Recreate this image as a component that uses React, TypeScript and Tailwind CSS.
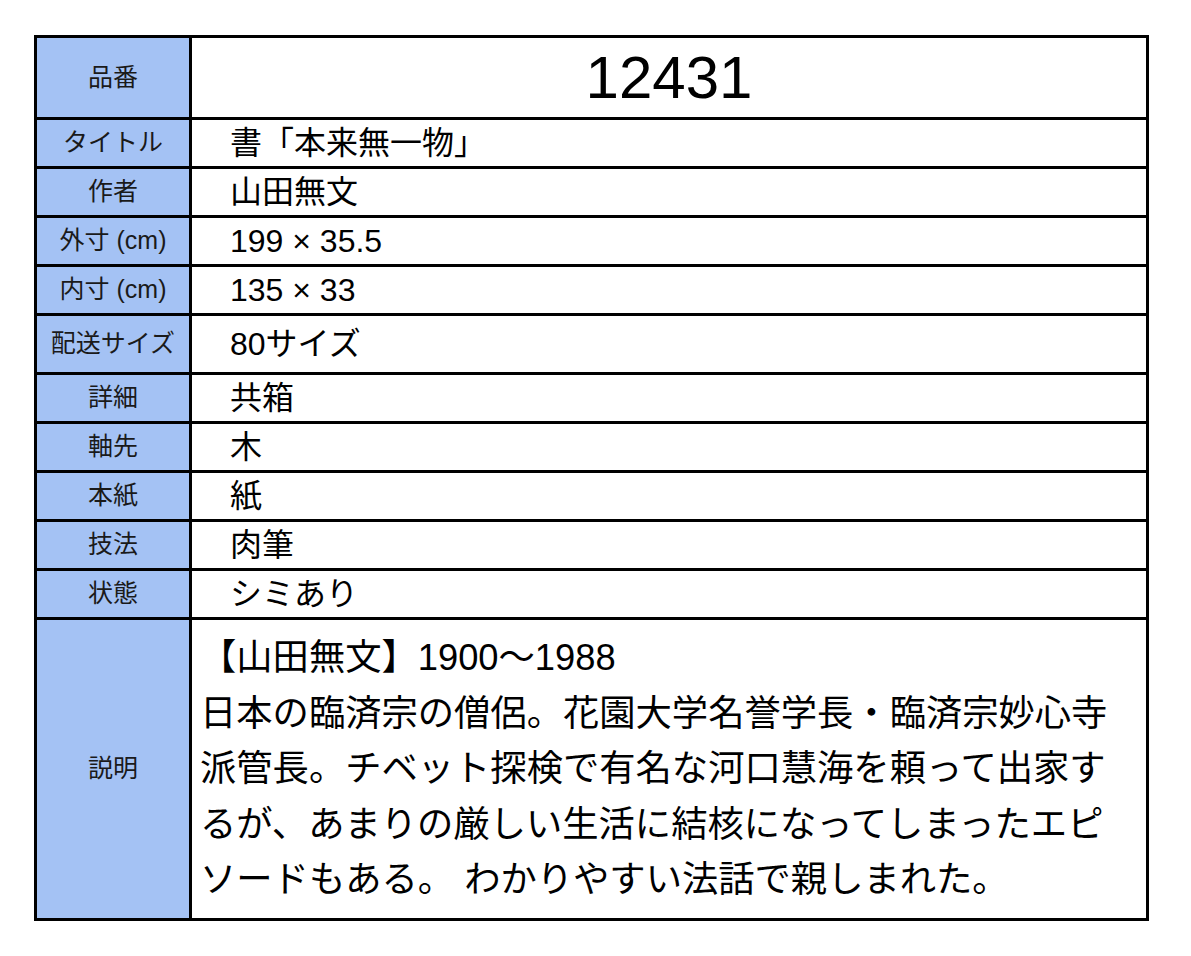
import React from 'react';

interface Row {
  label: string;
  value: string;
  h: string;
}

const rows: Row[] = [
  { label: 'タイトル', value: '書「本来無一物」', h: 'h-[46px]' },
  { label: '作者', value: '山田無文', h: 'h-[46px]' },
  { label: '外寸 (cm)', value: '199 × 35.5', h: 'h-[46px]' },
  { label: '内寸 (cm)', value: '135 × 33', h: 'h-[46px]' },
  { label: '配送サイズ', value: '80サイズ', h: 'h-[56px]' },
  { label: '詳細', value: '共箱', h: 'h-[46px]' },
  { label: '軸先', value: '木', h: 'h-[46px]' },
  { label: '本紙', value: '紙', h: 'h-[46px]' },
  { label: '技法', value: '肉筆', h: 'h-[46px]' },
  { label: '状態', value: 'シミあり', h: 'h-[46px]' },
];

const descLines = [
  '【山田無文】1900〜1988',
  '日本の臨済宗の僧侶。花園大学名誉学長・臨済宗妙心寺',
  '派管長。チベット探検で有名な河口慧海を頼って出家す',
  'るが、あまりの厳しい生活に結核になってしまったエピ',
  'ソードもある。 わかりやすい法話で親しまれた。',
];

const Label = ({ children }: { children: React.ReactNode }) => (
  <div className="w-[155px] shrink-0 border-r-[3px] border-black bg-[#a4c2f4] flex items-center justify-center text-[25px] text-[#1a1a1a] whitespace-nowrap">
    {children}
  </div>
);

export default function App() {
  return (
    <div
      className="min-h-screen bg-white pt-[35px] pl-[34px] text-black"
      style={{ fontFamily: '"Liberation Sans", "Noto Sans CJK JP", sans-serif' }}
    >
      <div className="w-[1115px] border-[3px] border-black flex flex-col">
        {/* item number */}
        <div className="flex h-[79px]">
          <Label>品番</Label>
          <div className="flex-1 flex items-center justify-center text-[60px] leading-none">12431</div>
        </div>

        {rows.map((row) => (
          <div key={row.label} className={`flex border-t-[3px] border-black box-content ${row.h}`}>
            <Label>{row.label}</Label>
            <div className="flex-1 flex items-center pl-[38px] text-[32px] whitespace-nowrap">{row.value}</div>
          </div>
        ))}

        {/* description */}
        <div className="flex border-t-[3px] border-black box-content h-[298px]">
          <Label>説明</Label>
          <div className="flex-1 flex flex-col justify-center pl-[8px] text-[36.3px] leading-[55.5px]">
            {descLines.map((line) => (
              <div key={line} className="whitespace-nowrap">{line}</div>
            ))}
          </div>
        </div>
      </div>
    </div>
  );
}
